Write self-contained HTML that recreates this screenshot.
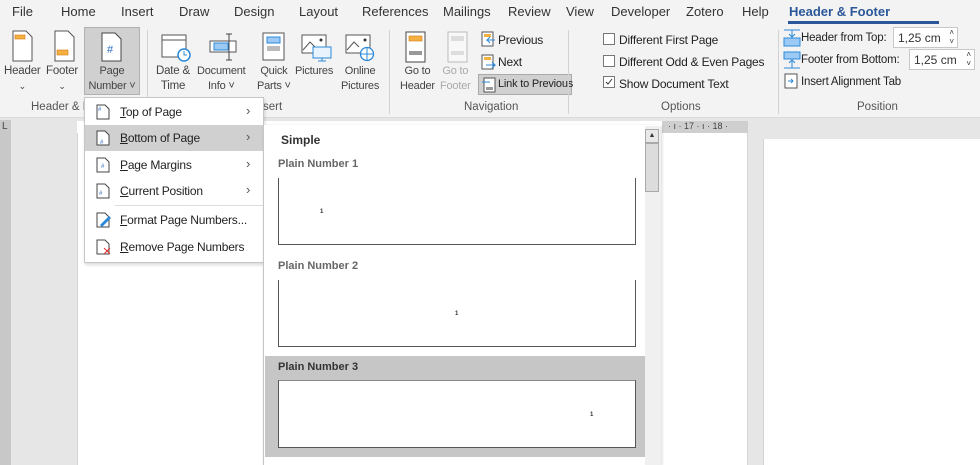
<!DOCTYPE html>
<html><head><meta charset="utf-8"><style>
*{margin:0;padding:0;box-sizing:border-box}
body{width:980px;height:465px;overflow:hidden;background:#e6e6e6;font-family:"Liberation Sans",sans-serif;font-size:12px;color:#333;position:relative}
.a{position:absolute;white-space:nowrap}
.tab{top:4px;font-size:13px;color:#333}
.lbl{font-size:11.5px;color:#444;text-align:center;line-height:15px;letter-spacing:-0.2px}
.grp{top:101px;font-size:11.5px;color:#555}
.sep{position:absolute;top:30px;width:1px;height:84px;background:#d2d2d2}
.mi{font-size:12px;color:#222;letter-spacing:-0.2px}
.cb{position:absolute;width:12px;height:12px;border:1px solid #777;background:#fff}
.ph{font-size:11px;font-weight:bold;color:#666}
</style></head><body>
<div class="a" style="left:0;top:0;width:980px;height:118px;background:#f3f3f3;border-bottom:1px solid #dadada"></div>
<div class="a tab" style="left:12px">File</div>
<div class="a tab" style="left:61px">Home</div>
<div class="a tab" style="left:121px">Insert</div>
<div class="a tab" style="left:179px">Draw</div>
<div class="a tab" style="left:234px">Design</div>
<div class="a tab" style="left:299px">Layout</div>
<div class="a tab" style="left:362px">References</div>
<div class="a tab" style="left:443px">Mailings</div>
<div class="a tab" style="left:508px">Review</div>
<div class="a tab" style="left:566px">View</div>
<div class="a tab" style="left:611px">Developer</div>
<div class="a tab" style="left:686px">Zotero</div>
<div class="a tab" style="left:742px">Help</div>
<div class="a tab" style="left:789px;color:#2b579a;font-weight:bold">Header &amp; Footer</div>
<div class="a" style="left:788px;top:21px;width:151px;height:3px;background:#2b579a"></div>

<svg class="a" style="left:10px;top:30px" width="24" height="32"><path d="M3 1h13l6 6v24H3z" fill="#fff" stroke="#555"/><rect x="5" y="5" width="10" height="4" fill="#f6b042" stroke="#d07a10" stroke-width=".6"/></svg>
<div class="a lbl" style="left:4px;top:64px">Header<br><span style="font-size:9px">⌄</span></div>
<svg class="a" style="left:52px;top:30px" width="24" height="32"><path d="M3 1h13l6 6v24H3z" fill="#fff" stroke="#555"/><rect x="5" y="20" width="11" height="5" fill="#f6b042" stroke="#d07a10" stroke-width=".6"/></svg>
<div class="a lbl" style="left:46px;top:64px">Footer<br><span style="font-size:9px">⌄</span></div>
<div class="a" style="left:84px;top:27px;width:56px;height:68px;background:#d0d0d0;border:1px solid #b0b0b0"></div>
<svg class="a" style="left:100px;top:32px" width="24" height="30"><path d="M2 1h13l6 6v22H2z" fill="#fff" stroke="#444"/><text x="7" y="21" font-size="11" fill="#2b6cc4" font-family="Liberation Sans">#</text></svg>
<div class="a lbl" style="left:86px;top:64px;width:52px;font-size:11px">Page<br>Number ˅</div>
<div class="a grp" style="left:31px">Header &amp; F</div>
<div class="sep" style="left:147px"></div>

<svg class="a" style="left:160px;top:32px" width="32" height="32"><rect x="2" y="3" width="24" height="22" fill="#fff" stroke="#555"/><line x1="2" y1="8" x2="26" y2="8" stroke="#555"/><circle cx="24" cy="23" r="6" fill="#fff" stroke="#2b88d8" stroke-width="1.5"/><path d="M24 19v4h3" stroke="#2b88d8" fill="none"/></svg>
<div class="a lbl" style="left:156px;top:64px">Date &amp;<br>Time</div>
<svg class="a" style="left:208px;top:32px" width="32" height="30"><rect x="2" y="9" width="26" height="11" fill="#fff" stroke="#555"/><rect x="6" y="11" width="14" height="7" fill="#9ccaf4" stroke="#2b88d8"/><path d="M21 2v26M18 2h6M18 28h6" stroke="#444"/></svg>
<div class="a lbl" style="left:197px;top:64px;font-size:11px">Document<br>Info ˅</div>
<svg class="a" style="left:262px;top:32px" width="24" height="30"><rect x="1" y="1" width="21" height="27" fill="#fff" stroke="#555"/><rect x="5" y="5" width="13" height="6" fill="#9ccaf4" stroke="#2b88d8"/><rect x="5" y="14" width="13" height="5" fill="#bbb"/></svg>
<div class="a lbl" style="left:257px;top:64px;font-size:11px">Quick<br>Parts ˅</div>
<svg class="a" style="left:300px;top:33px" width="32" height="30"><rect x="2" y="2" width="24" height="18" fill="#fff" stroke="#555"/><path d="M3 17l7-8 5 5" stroke="#555" fill="none"/><circle cx="21" cy="7" r="1.5" fill="#333"/><rect x="13" y="14" width="18" height="11" fill="#e8f3fd" stroke="#2b88d8"/><path d="M22 25v3M18 28h8" stroke="#2b88d8"/></svg>
<div class="a lbl" style="left:295px;top:64px;font-size:11px">Pictures</div>
<svg class="a" style="left:344px;top:33px" width="32" height="30"><rect x="2" y="2" width="24" height="18" fill="#fff" stroke="#555"/><path d="M3 17l7-8 5 5" stroke="#555" fill="none"/><circle cx="21" cy="7" r="1.5" fill="#333"/><circle cx="23" cy="21" r="6.5" fill="#fff" stroke="#2b88d8" stroke-width="1.3"/><path d="M16.5 21h13M23 14.5v13" stroke="#2b88d8"/></svg>
<div class="a lbl" style="left:341px;top:64px;font-size:11px">Online<br>Pictures</div>
<div class="a grp" style="left:263px">sert</div>
<div class="sep" style="left:389px"></div>

<svg class="a" style="left:404px;top:31px" width="24" height="32"><rect x="2" y="1" width="19" height="30" fill="#fff" stroke="#444"/><rect x="5" y="5" width="13" height="5" fill="#f6b042" stroke="#d07a10" stroke-width=".6"/><rect x="5" y="20" width="13" height="4" fill="#999"/></svg>
<div class="a lbl" style="left:400px;top:64px;font-size:11px">Go to<br>Header</div>
<svg class="a" style="left:446px;top:31px" width="24" height="32"><rect x="2" y="1" width="19" height="30" fill="#f8f8f8" stroke="#bbb"/><rect x="5" y="5" width="13" height="5" fill="#ddd"/><rect x="5" y="20" width="13" height="4" fill="#ddd"/></svg>
<div class="a lbl" style="left:440px;top:64px;color:#aaa;font-size:11px">Go to<br>Footer</div>
<svg class="a" style="left:481px;top:31px" width="16" height="16"><rect x="1" y="1" width="11" height="14" fill="#fff" stroke="#555"/><rect x="3" y="3" width="7" height="3" fill="#f6b042"/><path d="M14 9H6l3-3M6 9l3 3" stroke="#2b88d8" fill="none"/></svg>
<div class="a mi" style="left:498px;top:33px">Previous</div>
<svg class="a" style="left:481px;top:54px" width="16" height="16"><rect x="1" y="1" width="11" height="14" fill="#fff" stroke="#555"/><rect x="3" y="3" width="7" height="3" fill="#f6b042"/><path d="M5 11h9l-3-3M14 11l-3 3" stroke="#2b88d8" fill="none"/></svg>
<div class="a mi" style="left:498px;top:55px">Next</div>
<div class="a" style="left:478px;top:74px;width:94px;height:21px;background:#d0d0d0;border:1px solid #aaa"></div>
<svg class="a" style="left:481px;top:77px" width="16" height="16"><rect x="3" y="1" width="11" height="14" fill="#fff" stroke="#555"/><rect x="5" y="10" width="7" height="3" fill="#999"/><path d="M1 5h8" stroke="#2b88d8"/></svg>
<div class="a mi" style="left:498px;top:78px;font-size:11px">Link to Previous</div>
<div class="a grp" style="left:464px">Navigation</div>
<div class="sep" style="left:568px"></div>

<div class="cb" style="left:603px;top:33px"></div>
<div class="a mi" style="left:619px;top:33px">Different First Page</div>
<div class="cb" style="left:603px;top:55px"></div>
<div class="a mi" style="left:619px;top:55px">Different Odd &amp; Even Pages</div>
<div class="cb" style="left:603px;top:76px"><svg width="10" height="10" style="position:absolute;left:0;top:0"><path d="M2 5l2 2 4-5" stroke="#333" fill="none"/></svg></div>
<div class="a mi" style="left:619px;top:77px">Show Document Text</div>
<div class="a grp" style="left:661px">Options</div>
<div class="sep" style="left:778px"></div>

<svg class="a" style="left:783px;top:29px" width="18" height="18"><rect x="1" y="9" width="16" height="8" fill="#9ccaf4" stroke="#2b88d8"/><path d="M9 1v7M6 5l3 3 3-3M1 1h16" stroke="#2b88d8" fill="none"/></svg>
<div class="a mi" style="left:801px;top:32px;font-size:11.5px">Header from Top:</div>
<div class="a" style="left:893px;top:27px;width:65px;height:21px;background:#fff;border:1px solid #c8c8c8;font-size:12px;padding:3px 4px">1,25 cm<span style="position:absolute;right:3px;top:0;font-size:8px;line-height:9px">˄<br>˅</span></div>
<svg class="a" style="left:783px;top:51px" width="18" height="18"><rect x="1" y="1" width="16" height="7" fill="#9ccaf4" stroke="#2b88d8"/><path d="M9 17v-7M6 12l3-3 3 3M1 17h16" stroke="#2b88d8" fill="none"/></svg>
<div class="a mi" style="left:801px;top:54px;font-size:11.5px">Footer from Bottom:</div>
<div class="a" style="left:909px;top:49px;width:66px;height:21px;background:#fff;border:1px solid #c8c8c8;font-size:12px;padding:3px 4px">1,25 cm<span style="position:absolute;right:3px;top:0;font-size:8px;line-height:9px">˄<br>˅</span></div>
<svg class="a" style="left:784px;top:73px" width="14" height="16"><rect x="1" y="1" width="12" height="14" fill="#fff" stroke="#555"/><path d="M4 8h5M7 6l2 2-2 2" stroke="#2b88d8" fill="none"/></svg>
<div class="a mi" style="left:801px;top:76px;font-size:11.5px">Insert Alignment Tab</div>
<div class="a grp" style="left:857px">Position</div>

<div class="a" style="left:0;top:120px;width:11px;height:345px;background:#c8c8c8"></div>
<div class="a" style="left:2px;top:121px;font-size:10px;color:#444">L</div>
<div class="a" style="left:77px;top:121px;width:585px;height:12px;background:#fff"></div>
<div class="a" style="left:662px;top:121px;width:86px;height:12px;background:#cfcfcf;font-size:9px;color:#444;padding-left:6px">· ı · 17 · ı · 18 ·</div>
<div class="a" style="left:77px;top:133px;width:671px;height:332px;background:#fff;border-left:1px solid #d4d4d4;border-right:1px solid #d4d4d4"></div>
<div class="a" style="left:763px;top:139px;width:217px;height:326px;background:#fff;border-left:1px solid #d4d4d4"></div>

<div class="a" style="left:84px;top:97px;width:180px;height:166px;background:#fff;border:1px solid #c6c6c6;box-shadow:1px 2px 3px rgba(0,0,0,.15)"></div>
<div class="a" style="left:85px;top:125px;width:178px;height:26px;background:#d0d0d0"></div>
<svg class="a" style="left:96px;top:104px" width="14" height="16"><path d="M1 1h8l4 4v10H1z" fill="#fff" stroke="#444"/><text x="2" y="7" font-size="6" fill="#2b6cc4">#</text></svg>
<div class="a mi" style="left:120px;top:105px"><u>T</u>op of Page</div>
<svg class="a" style="left:96px;top:130px" width="14" height="16"><path d="M1 1h8l4 4v10H1z" fill="#fff" stroke="#444"/><text x="4" y="14" font-size="6" fill="#2b6cc4">#</text></svg>
<div class="a mi" style="left:120px;top:131px"><u>B</u>ottom of Page</div>
<svg class="a" style="left:96px;top:157px" width="14" height="16"><path d="M1 1h8l4 4v10H1z" fill="#fff" stroke="#444"/><text x="5" y="11" font-size="6" fill="#2b6cc4">#</text></svg>
<div class="a mi" style="left:120px;top:158px"><u>P</u>age Margins</div>
<svg class="a" style="left:96px;top:183px" width="14" height="16"><path d="M1 1h8l4 4v10H1z" fill="#fff" stroke="#444"/><text x="3" y="12" font-size="6" fill="#2b6cc4">#</text></svg>
<div class="a mi" style="left:120px;top:184px"><u>C</u>urrent Position</div>
<div class="a" style="left:246px;top:103px;font-size:13px;color:#555">›</div>
<div class="a" style="left:246px;top:129px;font-size:13px;color:#555">›</div>
<div class="a" style="left:246px;top:156px;font-size:13px;color:#555">›</div>
<div class="a" style="left:246px;top:182px;font-size:13px;color:#555">›</div>
<div class="a" style="left:115px;top:205px;width:148px;height:1px;background:#ddd"></div>
<svg class="a" style="left:96px;top:212px" width="16" height="16"><path d="M1 1h8l4 4v10H1z" fill="#fff" stroke="#444"/><path d="M4 13l9-9 2 2-9 9z" fill="#2b88d8"/></svg>
<div class="a mi" style="left:120px;top:213px"><u>F</u>ormat Page Numbers...</div>
<svg class="a" style="left:96px;top:239px" width="16" height="16"><path d="M1 1h8l4 4v10H1z" fill="#fff" stroke="#444"/><path d="M8 9l6 6M14 9l-6 6" stroke="#e03030"/></svg>
<div class="a mi" style="left:120px;top:240px"><u>R</u>emove Page Numbers</div>

<div class="a" style="left:263px;top:125px;width:398px;height:340px;background:#fff;border-left:1px solid #c6c6c6;box-shadow:1px 1px 3px rgba(0,0,0,.15)"></div>
<div class="a" style="left:645px;top:126px;width:16px;height:339px;background:#f0f0f0"></div>
<div class="a" style="left:645px;top:129px;width:14px;height:14px;border:1px solid #aaa;background:#e8e8e8;font-size:7px;text-align:center;line-height:12px">▲</div>
<div class="a" style="left:645px;top:143px;width:14px;height:49px;border:1px solid #aaa;background:#dcdcdc"></div>
<div class="a" style="left:281px;top:133px;font-size:12px;font-weight:bold;color:#333">Simple</div>
<div class="a ph" style="left:278px;top:158px">Plain Number 1</div>
<div class="a" style="left:278px;top:178px;width:358px;height:67px;border:1.5px solid #555;border-top:none"></div>
<div class="a" style="left:320px;top:209px;font-size:6px;font-weight:bold">1</div>
<div class="a ph" style="left:278px;top:260px">Plain Number 2</div>
<div class="a" style="left:278px;top:280px;width:358px;height:67px;border:1.5px solid #555;border-top:none"></div>
<div class="a" style="left:455px;top:311px;font-size:6px;font-weight:bold">1</div>
<div class="a" style="left:265px;top:356px;width:380px;height:101px;background:#c6c6c6"></div>
<div class="a ph" style="left:278px;top:361px;color:#333">Plain Number 3</div>
<div class="a" style="left:278px;top:380px;width:358px;height:68px;background:#fff;border:1.5px solid #555;border-top:1px solid #888"></div>
<div class="a" style="left:590px;top:412px;font-size:6px;font-weight:bold">1</div>
</body></html>
